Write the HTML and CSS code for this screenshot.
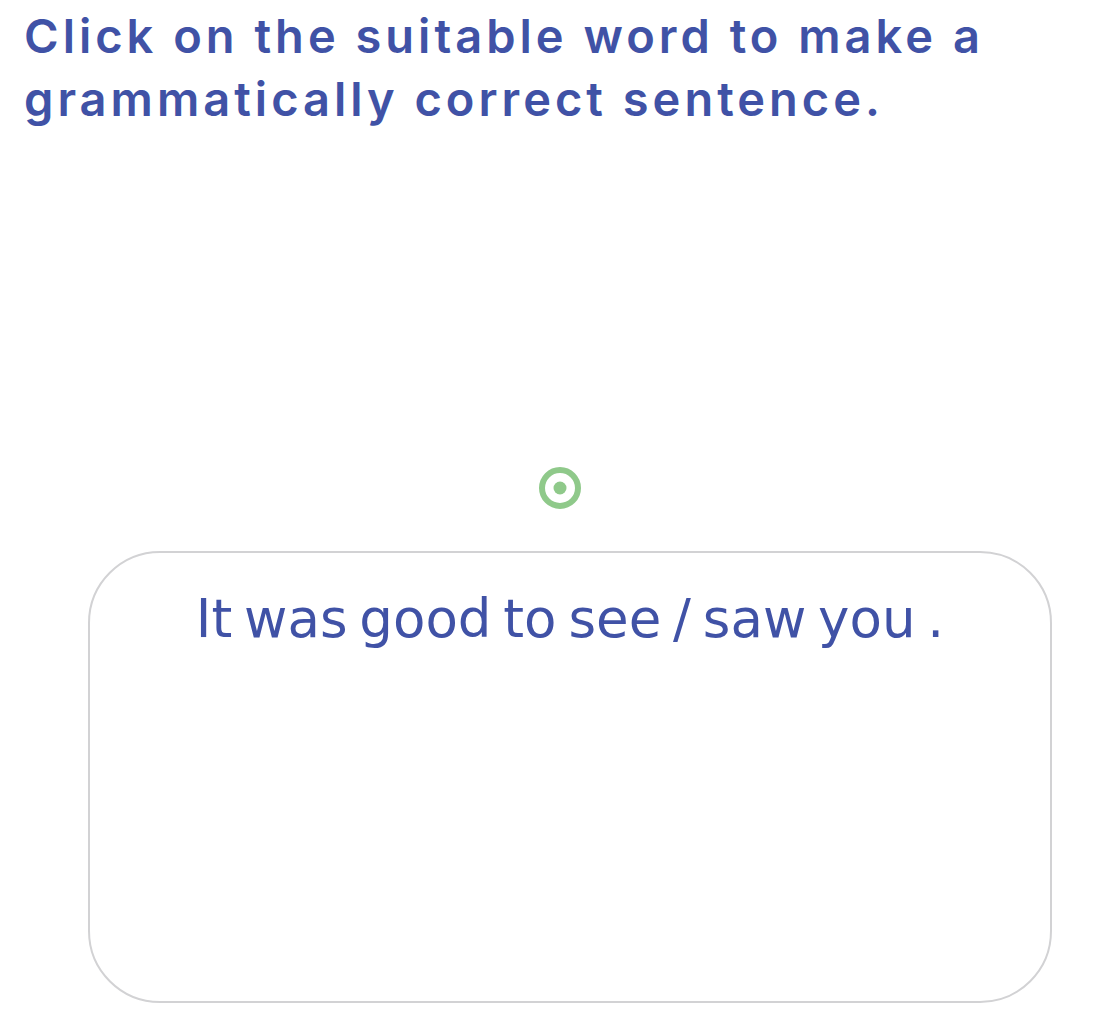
FILE: index.html
```html
<!DOCTYPE html>
<html lang="en">
<head>
    <meta charset="UTF-8">
    <meta name="viewport" content="width=device-width, initial-scale=1.0">
    <title>Grammar Exercise</title>
    <link rel="stylesheet" href="styles.css">
</head>
<body>
    <div class="page">
        <h1 class="task-title">Click on the suitable word to make a grammatically correct sentence.</h1>
        <div class="marker">
            <svg width="44" height="44" viewBox="0 0 44 44">
                <circle cx="22" cy="22" r="18" fill="none" stroke="#8fc98a" stroke-width="6"/>
                <circle cx="22" cy="22" r="6.5" fill="#8fc98a"/>
            </svg>
        </div>
        <div class="sentence-card">
            <p class="sentence">It was good to <span class="choice">see</span> / <span class="choice">saw</span> you .</p>
        </div>
    </div>
</body>
</html>
```

FILE: styles.css
```css
body {
    margin: 0;
    background-color: #ffffff;
    font-family: Inter, "Open Sans", sans-serif;
    color: #4052a6;
}
.page {
    display: flex;
    flex-direction: column;
    padding: 4px 24px 0 24px;
}
.task-title {
    margin: 0;
    font-size: 47px;
    line-height: 63px;
    font-weight: 600;
    letter-spacing: 4px;
    color: #4052a6;
    max-width: 1000px;
}
.marker {
    display: flex;
    justify-content: center;
    margin-top: 336px;
}
.sentence-card {
    margin: 41px 44px 0 64px;
    height: 448px;
    border: 2px solid #d2d2d4;
    border-radius: 72px;
    box-sizing: content-box;
}
.sentence {
    margin: 0;
    padding-top: 36px;
    text-align: center;
    font-family: "DejaVu Sans", sans-serif;
    font-size: 53px;
    line-height: 60px;
    font-weight: 400;
    word-spacing: -5px;
}
.choice {
    cursor: pointer;
}
```
